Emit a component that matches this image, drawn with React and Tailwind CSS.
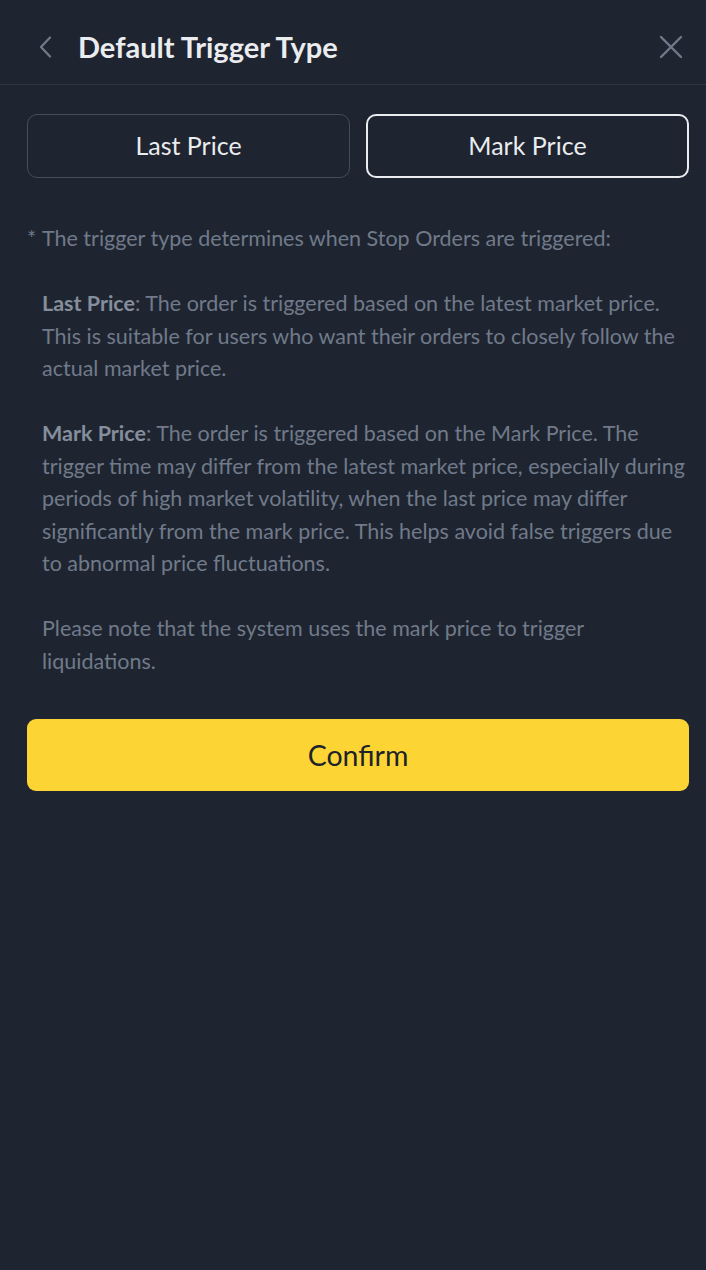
import React from "react";

export default function App() {
  return (
    <div className="min-h-[1270px] w-full bg-[#1f2530] font-['Lato',sans-serif]">
      <div className="flex h-[85px] items-center border-b border-[#2f3541] pl-[36px] pr-[23px] pt-[9px]">
        <svg width="18" height="22" viewBox="0 0 18 22" fill="none" className="shrink-0">
          <path d="M14 1.5 L5 11 L14 20.5" stroke="#707a8a" strokeWidth="2.2" strokeLinecap="round" strokeLinejoin="round" />
        </svg>
        <h1 className="ml-[24px] text-[29px] font-bold leading-none text-[#eaecef]">Default Trigger Type</h1>
        <div className="flex-1" />
        <svg width="24" height="24" viewBox="0 0 24 24" fill="none" className="shrink-0">
          <path d="M2 2 L22 22 M22 2 L2 22" stroke="#707a8a" strokeWidth="2.4" strokeLinecap="round" />
        </svg>
      </div>

      <div className="pl-[27px] pr-[17px] pt-[29px]">
        <div className="grid grid-cols-2 gap-[16px]">
          <button className="flex h-[64px] items-center justify-center rounded-[10px] border border-[#474d57] text-[25px] text-[#eaecef]">
            Last Price
          </button>
          <button className="flex h-[64px] items-center justify-center rounded-[10px] border-2 border-[#eaecef] text-[25px] text-[#eaecef]">
            Mark Price
          </button>
        </div>

        <div className="mt-[44px] text-[21.5px] leading-[32.5px] text-[#707a8a]">
          <div className="flex">
            <span className="w-[15px] shrink-0">*</span>
            <span>The trigger type determines when Stop Orders are triggered:</span>
          </div>
          <div className="pl-[15px]">
            <div className="h-[32.5px]" />
            <div><span className="font-bold text-[#848e9c]">Last Price</span>: The order is triggered based on the latest market price.</div>
            <div>This is suitable for users who want their orders to closely follow the</div>
            <div>actual market price.</div>
            <div className="h-[32.5px]" />
            <div><span className="font-bold text-[#848e9c]">Mark Price</span>: The order is triggered based on the Mark Price. The</div>
            <div>trigger time may differ from the latest market price, especially during</div>
            <div>periods of high market volatility, when the last price may differ</div>
            <div>significantly from the mark price. This helps avoid false triggers due</div>
            <div>to abnormal price fluctuations.</div>
            <div className="h-[32.5px]" />
            <div>Please note that the system uses the mark price to trigger</div>
            <div>liquidations.</div>
          </div>
        </div>

        <button className="mt-[42px] flex h-[72px] w-full items-center justify-center rounded-[9px] bg-[#fcd535] text-[28.5px] text-[#1e2329]">
          Confirm
        </button>
      </div>
    </div>
  );
}
